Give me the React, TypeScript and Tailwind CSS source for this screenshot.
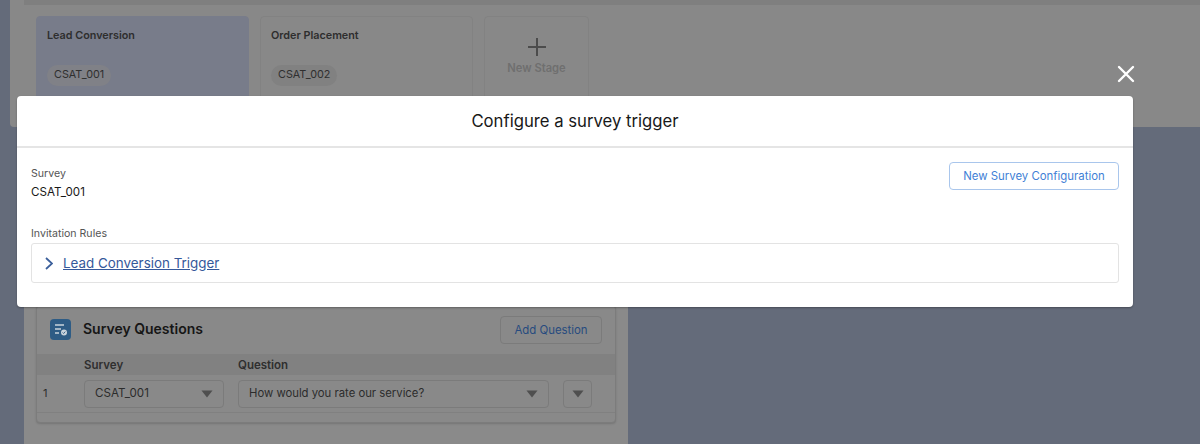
const font = "font-['Inter','Liberation_Sans',sans-serif]";

function Caret() {
  return (
    <svg width="12" height="8" viewBox="0 0 12 8" className="shrink-0">
      <path d="M0.5 0.5h11L6 7.5z" fill="#4f4f4f" />
    </svg>
  );
}

function Stage({ title, chip, active }: { title: string; chip: string; active?: boolean }) {
  return (
    <div className={`w-[213px] h-[120px] shrink-0 rounded-[4px] border px-[10px] pt-[12px] ${active ? "bg-[#787c8a] border-[#787c8a]" : "border-[#828282]"}`}>
      <div className="text-[10.8px] leading-[14px] font-semibold text-[#2e2e2e]">{title}</div>
      <div className={`mt-[22px] inline-flex h-[21px] items-center rounded-full px-[7px] text-[10.8px] text-[#2f2f2f] ${active ? "bg-[#808187]" : "bg-[#818181]"}`}>{chip}</div>
    </div>
  );
}

export default function App() {
  return (
    <div className={`relative h-[444px] w-[1200px] overflow-hidden bg-[#646b7a] ${font}`}>
      <div className="ml-[10px] h-[127px] bg-[#888888] rounded-bl-[4px]">
        <div className="ml-[14px] h-[5px] bg-[#7f7f7f]" />
        <div className="flex gap-[11px] pl-[26px] pt-[11px]">
          <Stage title="Lead Conversion" chip="CSAT_001" active />
          <Stage title="Order Placement" chip="CSAT_002" />
          <div className="flex h-[120px] w-[105px] shrink-0 flex-col items-center rounded-[4px] border border-[#828282] pt-[21px]">
            <svg width="18" height="18" viewBox="0 0 18 18">
              <path d="M9 0v18M0 9h18" stroke="#4c4c4c" strokeWidth="2" />
            </svg>
            <div className="mt-[4px] text-[11.2px] font-semibold text-[#6f6f6f]">New Stage</div>
          </div>
        </div>
      </div>

      <div className="ml-[24px] h-[317px] w-[604px] bg-[#8a8a8a] px-[12px] pt-[178px]">
        <div className="h-[118px] rounded-[4px] border border-[#7c7c7c] bg-[#898989] shadow-[0_1px_2px_rgba(0,0,0,0.15)]">
          <div className="flex h-[48px] items-center justify-between pb-[1px] pl-[13px] pr-[13px]">
            <div className="flex items-center gap-[12px]">
              <div className="flex h-[21px] w-[21px] items-center justify-center rounded-[4px] bg-[#2e5c85]">
                <svg width="15" height="15" viewBox="0 0 15 15" fill="none" stroke="#c9d3dc" strokeWidth="1.6">
                  <path d="M2 3h9M2 7h6M2 11h4" />
                  <circle cx="11" cy="10.5" r="3" fill="#c9d3dc" stroke="none" />
                  <path d="M9.6 10.5l1 1 1.7-1.9" stroke="#2e5c85" strokeWidth="0.9" />
                </svg>
              </div>
              <span className="pb-[2px] text-[14px] font-semibold text-[#161616]">Survey Questions</span>
            </div>
            <div className="flex h-[28px] w-[102px] items-center justify-center rounded-[4px] border border-[#7b7b7b] pt-[2px] text-[11.4px] text-[#274b7f]">Add Question</div>
          </div>
          <div className="flex h-[21px] items-center bg-[#818181] pt-[2px] text-[11.5px] font-semibold text-[#2f2f2f]">
            <span className="ml-[47px] w-[154px]">Survey</span>
            <span>Question</span>
          </div>
          <div className="flex h-[38px] items-center border-b border-[#808080] text-[11.6px] text-[#2c2c2c]">
            <span className="ml-[6px] w-[41px] text-[11px]">1</span>
            <div className="flex h-[28px] w-[140px] items-center justify-between rounded-[4px] border border-[#7b7b7b] pl-[10px] pr-[10px]">
              <span>CSAT_001</span>
              <Caret />
            </div>
            <div className="ml-[14px] flex h-[28px] w-[311px] items-center justify-between rounded-[4px] border border-[#7b7b7b] pl-[10px] pr-[10px]">
              <span className="text-[11.3px]">How would you rate our service?</span>
              <Caret />
            </div>
            <div className="ml-[14px] flex h-[28px] w-[29px] items-center justify-center rounded-[4px] border border-[#7b7b7b]">
              <Caret />
            </div>
          </div>
        </div>
      </div>

      <div className="absolute left-[1117px] top-[65px]">
        <svg width="18" height="18" viewBox="0 0 18 18">
          <path d="M2 2l14 14M16 2L2 16" stroke="#ffffff" strokeWidth="2.4" strokeLinecap="round" />
        </svg>
      </div>

      <div className="absolute left-[17px] top-[96px] h-[211px] w-[1116px] rounded-[4px] bg-white shadow-[0_1px_2px_rgba(0,0,0,0.3)]">
        <div className="flex h-[52px] items-center justify-center border-b-2 border-[#e5e5e5] pt-[1px] text-[16.7px] text-[#181818]">
          Configure a survey trigger
        </div>
        <div className="px-[14px]">
          <div className="flex items-start justify-between pt-[14px]">
            <div className="pt-[4px]">
              <div className="text-[10.6px] leading-[16px] text-[#555555]">Survey</div>
              <div className="mt-[1px] text-[11.6px] leading-[18px] text-[#181818]">CSAT_001</div>
            </div>
            <div className="flex h-[28px] w-[170px] items-center justify-center rounded-[4px] border border-[#a9c6ec] pt-[2px] text-[11.4px] text-[#3f7fd6]">
              New Survey Configuration
            </div>
          </div>
          <div className="mt-[25px] text-[10.6px] leading-[16px] text-[#555555]">Invitation Rules</div>
          <div className="mt-[1px] flex h-[40px] items-center rounded-[3px] border border-[#e3e3e3] pl-[13px]">
            <svg width="8" height="13" viewBox="0 0 8 13" fill="none">
              <path d="M1 1l6 5.5-6 5.5" stroke="#3b5f9b" strokeWidth="1.8" />
            </svg>
            <a className="ml-[10px] text-[13.4px] text-[#35589a] underline">Lead Conversion Trigger</a>
          </div>
        </div>
      </div>
    </div>
  );
}
